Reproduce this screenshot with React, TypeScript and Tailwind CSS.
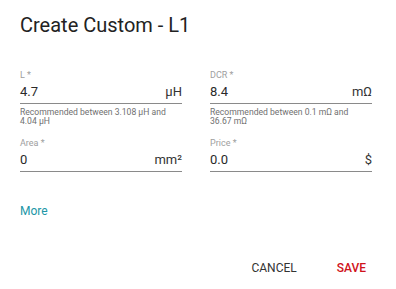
import React from "react";

type FieldProps = {
  label: string;
  value: string;
  unit: React.ReactNode;
  helper?: string;
};

function Field({ label, value, unit, helper }: FieldProps) {
  return (
    <div className="flex flex-col">
      <div className="text-[9px] leading-[11px] text-[#9e9e9e]">{label}</div>
      <div className="flex items-end justify-between border-b border-[#8a8a8a] pt-[3px] pb-[3px]">
        <span className="text-[13px] leading-[16px] text-[#2a2a2a]">{value}</span>
        <span className="text-[13px] leading-[16px] text-[#333]">{unit}</span>
      </div>
      {helper && (
        <div className="mt-[4px] text-[8.6px] leading-[9px] text-[#707070]">{helper}</div>
      )}
    </div>
  );
}

export default function App() {
  return (
    <div
      className="w-[396px] h-[289px] bg-white overflow-hidden flex flex-col"
      style={{ fontFamily: "Roboto, 'Noto Sans', sans-serif" }}
    >
      <h2 className="pl-5 pt-[13px] text-[20px] leading-[24px] font-normal text-[#222]">
        Create Custom - L1
      </h2>

      <div className="pl-5 pr-6 pt-[33px] grid grid-cols-2 gap-x-7 gap-y-[12px]">
        <Field
          label="L *"
          value="4.7"
          unit="μH"
          helper="Recommended between 3.108 μH and 4.04 μH"
        />
        <Field
          label="DCR *"
          value="8.4"
          unit="mΩ"
          helper="Recommended between 0.1 mΩ and 36.67 mΩ"
        />
        <Field label="Area *" value="0" unit="mm²" />
        <Field label="Price *" value="0.0" unit="$" />
      </div>

      <div className="pl-5 pt-[32px] text-[12px] leading-[14px] text-[#2196a6]">More</div>

      <div className="mt-auto mb-[14px] flex justify-end pr-[30px] gap-[40px] text-[12px] leading-[14px]">
        <button className="text-[#333]">CANCEL</button>
        <button className="text-[#d0121b] font-medium">SAVE</button>
      </div>
    </div>
  );
}
